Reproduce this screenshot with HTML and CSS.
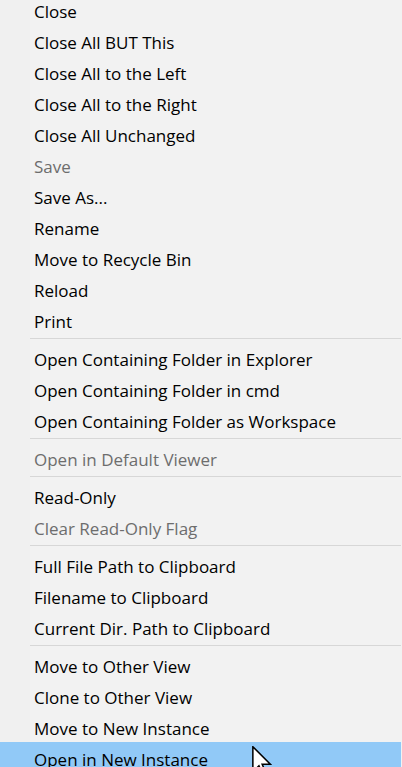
FILE: index.html
```html
<!DOCTYPE html>
<html>
<head>
<meta charset="utf-8">
<link rel="stylesheet" href="styles.css">
</head>
<body>
<div class="menu">
  <div class="item">Close</div>
  <div class="item">Close All BUT This</div>
  <div class="item">Close All to the Left</div>
  <div class="item">Close All to the Right</div>
  <div class="item">Close All Unchanged</div>
  <div class="item disabled">Save</div>
  <div class="item">Save As...</div>
  <div class="item">Rename</div>
  <div class="item">Move to Recycle Bin</div>
  <div class="item">Reload</div>
  <div class="item">Print</div>
  <div class="sep"></div>
  <div class="item">Open Containing Folder in Explorer</div>
  <div class="item">Open Containing Folder in cmd</div>
  <div class="item">Open Containing Folder as Workspace</div>
  <div class="sep"></div>
  <div class="item disabled">Open in Default Viewer</div>
  <div class="sep"></div>
  <div class="item">Read-Only</div>
  <div class="item disabled">Clear Read-Only Flag</div>
  <div class="sep"></div>
  <div class="item">Full File Path to Clipboard</div>
  <div class="item">Filename to Clipboard</div>
  <div class="item">Current Dir. Path to Clipboard</div>
  <div class="sep"></div>
  <div class="item">Move to Other View</div>
  <div class="item">Clone to Other View</div>
  <div class="item">Move to New Instance</div>
  <div class="item active">Open in New Instance</div>
</div>
<svg class="cursor" width="20" height="32" viewBox="0 0 13 21">
  <path d="M0.5 0.5 L0.5 17 L4.5 13 L7.5 19.5 L9.5 18.5 L6.6 12 L12 12 Z" fill="#fff" stroke="#000" stroke-width="1" stroke-linejoin="miter"/>
</svg>
</body>
</html>
```

FILE: styles.css
```css
html, body {
  margin: 0;
  padding: 0;
  background: #f2f2f2;
  overflow: hidden;
}
body {
  width: 402px;
  height: 767px;
  position: relative;
  font-family: "Open Sans", "Noto Sans", sans-serif;
  font-size: 17px;
  color: #000;
}
.menu {
  margin-top: -6px;
  display: flex;
  flex-direction: column;
  background: linear-gradient(to right, #f0f0f0 30px, #f2f2f2 30px);
  width: 401px;
}
.item {
  box-sizing: border-box;
  height: 31px;
  padding-top: 4px;
  line-height: 27px;
  padding-left: 34px;
  white-space: nowrap;
}
.item.disabled {
  color: #6d6d6d;
}
.item.active {
  background: #91c9f7;
}
.sep {
  height: 1px;
  margin: 3px 0 3px 30px;
  background: #d7d7d7;
}
.cursor {
  position: absolute;
  left: 252px;
  top: 746px;
}
```
